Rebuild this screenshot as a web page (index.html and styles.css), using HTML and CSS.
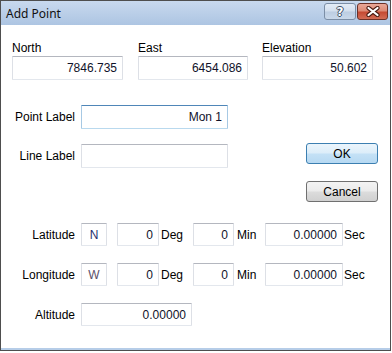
FILE: index.html
```html
<!DOCTYPE html>
<html lang="en">
<head>
    <meta charset="UTF-8">
    <title>Add Point</title>
    <link rel="stylesheet" href="styles.css">
</head>
<body>
    <div class="dialog">
        <div class="titlebar">
            <span class="title">Add Point</span>
            <div class="title-buttons">
                <span class="tbtn tbtn-help">?</span>
                <span class="tbtn tbtn-close">
                    <svg width="16" height="11" viewBox="0 0 16 11">
                        <path d="M3.5 2 L12.5 9 M12.5 2 L3.5 9" stroke="#4a1b12" stroke-width="4.2" stroke-linecap="round"/>
                        <path d="M3.5 2 L12.5 9 M12.5 2 L3.5 9" stroke="#fff" stroke-width="2.2" stroke-linecap="round"/>
                    </svg>
                </span>
            </div>
        </div>

        <div class="content">
            <div class="coords">
                <div class="coord coord-north">
                    <label>North</label>
                    <input class="field" type="text" value="7846.735" readonly>
                </div>
                <div class="coord coord-east">
                    <label>East</label>
                    <input class="field" type="text" value="6454.086" readonly>
                </div>
                <div class="coord coord-elev">
                    <label>Elevation</label>
                    <input class="field" type="text" value="50.602" readonly>
                </div>
            </div>

            <div class="row row-point">
                <label class="row-label">Point Label</label>
                <input class="field field-label focused" type="text" value="Mon 1" readonly>
            </div>

            <div class="row row-line">
                <label class="row-label">Line Label</label>
                <input class="field field-label" type="text" value="" readonly>
                <button class="btn btn-default">OK</button>
            </div>

            <div class="row row-cancel">
                <button class="btn">Cancel</button>
            </div>

            <div class="row row-geo row-lat">
                <label class="row-label">Latitude</label>
                <input class="field field-hemi hemi-n" type="text" value="N" readonly>
                <input class="field field-deg" type="text" value="0" readonly>
                <span class="unit unit-deg">Deg</span>
                <input class="field field-min" type="text" value="0" readonly>
                <span class="unit unit-min">Min</span>
                <input class="field field-sec" type="text" value="0.00000" readonly>
                <span class="unit unit-sec">Sec</span>
            </div>

            <div class="row row-geo">
                <label class="row-label">Longitude</label>
                <input class="field field-hemi hemi-w" type="text" value="W" readonly>
                <input class="field field-deg" type="text" value="0" readonly>
                <span class="unit unit-deg">Deg</span>
                <input class="field field-min" type="text" value="0" readonly>
                <span class="unit unit-min">Min</span>
                <input class="field field-sec" type="text" value="0.00000" readonly>
                <span class="unit unit-sec">Sec</span>
            </div>

            <div class="row row-geo">
                <label class="row-label">Altitude</label>
                <input class="field field-alt" type="text" value="0.00000" readonly>
            </div>
        </div>
    </div>
</body>
</html>
```

FILE: styles.css
```css
body {
    margin: 0;
    padding: 0;
    background-color: #fff;
    font-family: 'Liberation Sans', Arial, sans-serif;
    font-size: 12px;
    color: #000;
}

.dialog {
    width: 391px;
    height: 351px;
    box-sizing: border-box;
    border: 1px solid #4e4e4e;
    display: flex;
    flex-direction: column;
    background-color: #fff;
}

/* title bar */

.titlebar {
    height: 24px;
    flex: none;
    display: flex;
    justify-content: space-between;
    align-items: center;
    background: linear-gradient(#c8d9ee, #adc5e2);
}

.title {
    font-family: 'Noto Sans', 'Open Sans', sans-serif;
    font-size: 12px;
    color: #111;
    padding-left: 5px;
}

.title-buttons {
    display: flex;
    align-self: flex-start;
    margin-top: 2px;
    margin-right: 2px;
    gap: 1px;
}

.tbtn {
    height: 17px;
    box-sizing: border-box;
    border-radius: 3px;
    display: flex;
    align-items: center;
    justify-content: center;
}

.tbtn-help {
    width: 32px;
    border: 1px solid #7b8ea6;
    background: linear-gradient(#e4ecf6 0%, #d3dfee 48%, #bccde2 52%, #c9d8ea 100%);
    color: #fff;
    font-family: 'DejaVu Sans', sans-serif;
    font-weight: bold;
    font-size: 12px;
    text-shadow: 1px 0 0 #3b4c63, -1px 0 0 #3b4c63, 0 1px 0 #3b4c63, 0 -1px 0 #3b4c63;
}

.tbtn-close {
    width: 31px;
    border: 1px solid #6b3128;
    background: linear-gradient(#e9a898 0%, #dc8a75 45%, #c54a33 55%, #d26c55 100%);
}

/* content */

.content {
    flex: 1;
    padding-top: 16px;
    border-bottom: 2px solid #b6cde8;
}

.coords {
    display: flex;
    padding-left: 11px;
}

.coord {
    display: flex;
    flex-direction: column;
}

.coord label {
    line-height: 14px;
    margin-bottom: 1px;
}

.coord-north {
    width: 111px;
}

.coord-east {
    width: 110px;
    margin-left: 15px;
}

.coord-elev {
    width: 111px;
    margin-left: 14px;
}

.field {
    height: 24px;
    box-sizing: border-box;
    margin: 0;
    padding: 0 5px;
    border: 1px solid;
    border-color: #b4b7bf #dde0e6 #e3e7ed #dde0e6;
    border-radius: 1px;
    background-color: #fff;
    font-family: 'Liberation Sans', Arial, sans-serif;
    font-size: 12px;
    color: #10122a;
    text-align: right;
    outline: none;
}

.coord .field {
    width: 100%;
}

.focused {
    border-color: #4f86b8 #a7c9e4 #b9d9ee #a7c9e4;
}

.row {
    display: flex;
    align-items: center;
}

.row-label {
    width: 74px;
    flex: none;
    text-align: right;
    margin-right: 6px;
}

.row-point {
    margin-top: 25px;
}

.row-line {
    margin-top: 15px;
    padding-right: 12px;
}

.field-label {
    width: 147px;
}

.btn {
    width: 72px;
    height: 21px;
    box-sizing: border-box;
    padding: 0;
    border: 1px solid #707070;
    border-radius: 3px;
    background: linear-gradient(#f3f3f3 0%, #ebebeb 48%, #dcdcdc 52%, #d0d0d0 100%);
    font-family: 'Liberation Sans', Arial, sans-serif;
    font-size: 12px;
    color: #000;
}

.btn-default {
    margin-left: auto;
    align-self: flex-start;
    margin-top: -1px;
    border-color: #3c7fb1;
    background: linear-gradient(#ebf5fc 0%, #dcedf9 48%, #c4e1f6 52%, #b7d9f2 100%);
}

.row-cancel {
    justify-content: flex-end;
    padding-right: 12px;
    margin-top: 13px;
}

.row-geo {
    margin-top: 17px;
}

.row-lat {
    margin-top: 21px;
}

.row-geo .field {
    height: 23px;
}

.field-hemi {
    width: 26px;
    text-align: center;
    padding: 0;
}

.hemi-n {
    color: #24306e;
}

.hemi-w {
    color: #5a4f6a;
}

.field-deg {
    width: 42px;
    margin-left: 10px;
}

.field-min {
    width: 41px;
}

.field-sec {
    width: 78px;
}

.field-alt {
    width: 111px;
}

.unit {
    flex: none;
}

.unit-deg {
    width: 32px;
    margin-left: 2px;
}

.unit-min {
    width: 28px;
    margin-left: 3px;
}

.unit-sec {
    margin-left: 1px;
}
```
